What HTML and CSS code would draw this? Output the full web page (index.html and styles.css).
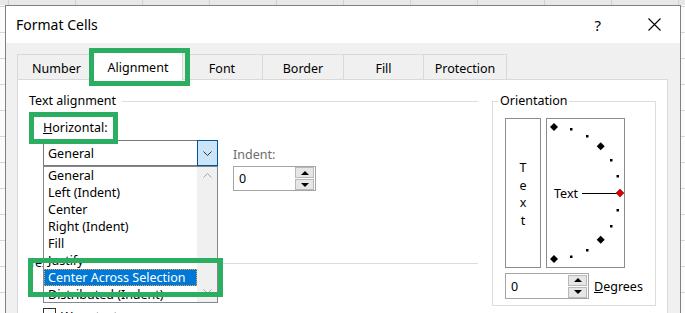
FILE: index.html
```html
<!DOCTYPE html>
<html lang="en">
<head>
    <meta charset="UTF-8">
    <meta name="viewport" content="width=device-width, initial-scale=1.0">
    <title>Format Cells</title>
    <link rel="stylesheet" href="styles.css">
</head>
<body>
    <div class="dialog">
        <div class="titlebar">
            <span class="title">Format Cells</span>
            <span class="help">?</span>
            <svg class="close" width="13" height="13" viewBox="0 0 13 13"><path d="M0.5 0.5 L12.5 12.5 M12.5 0.5 L0.5 12.5" stroke="#000" stroke-width="1.1" fill="none"/></svg>
        </div>

        <div class="tabs">
            <div class="tab tab-number">Number</div>
            <div class="tab tab-alignment active">Alignment<span class="mark mark-tab"></span></div>
            <div class="tab tab-font">Font</div>
            <div class="tab tab-border">Border</div>
            <div class="tab tab-fill">Fill</div>
            <div class="tab tab-protection">Protection</div>
        </div>

        <div class="panel">
            <div class="align-col">
                <div class="group-title"><span>Text alignment</span><i class="rule"></i></div>
                <div class="field-label"><u>H</u>orizontal:<span class="mark mark-horiz"></span></div>

                <div class="combo-row">
                    <div class="combo">
                        <span class="combo-value">General</span>
                        <span class="combo-btn">
                            <svg width="9" height="5" viewBox="0 0 9 5"><path d="M0.5 0.5 L4.5 4.5 L8.5 0.5" stroke="#333" fill="none"/></svg>
                        </span>
                        <div class="dropdown">
                            <ul class="options">
                                <li>General</li>
                                <li>Left (Indent)</li>
                                <li>Center</li>
                                <li>Right (Indent)</li>
                                <li>Fill</li>
                                <li>Justify</li>
                                <li class="selected">Center Across Selection</li>
                                <li>Distributed (Indent)</li>
                            </ul>
                            <div class="scrollbar">
                                <svg width="9" height="5" viewBox="0 0 9 5"><path d="M0.5 4.5 L4.5 0.5 L8.5 4.5" stroke="#a6a6a6" fill="none"/></svg>
                                <svg width="9" height="5" viewBox="0 0 9 5"><path d="M0.5 0.5 L4.5 4.5 L8.5 0.5" stroke="#a6a6a6" fill="none"/></svg>
                            </div>
                        </div>
                        <span class="mark mark-option"></span>
                    </div>

                    <div class="indent">
                        <div class="indent-label">Indent:</div>
                        <div class="spin">
                            <span class="spin-value">0</span>
                            <span class="spin-btns">
                                <span class="spin-btn up"></span>
                                <span class="spin-btn down"></span>
                            </span>
                        </div>
                    </div>
                </div>

                <div class="group-title control"><span>Text control</span><i class="rule"></i></div>
                <div class="check"><span class="box"></span><span class="check-label"><u>W</u>rap text</span></div>
            </div>

            <fieldset class="orientation">
                <legend>Orientation</legend>
                <div class="dials">
                    <div class="vert-text"><span>T</span><span>e</span><span>x</span><span>t</span></div>
                    <div class="dial">
                        <svg width="77" height="148" viewBox="0 0 77 148">
                            <text x="7" y="79" font-family="Noto Sans, sans-serif" font-size="12.5">Text</text>
                            <line x1="35" y1="74.5" x2="70" y2="74.5" stroke="#000" stroke-width="1"/>
                            <polygon points="7,4 11,8 7,12 3,8" fill="#000"/>
                            <rect x="23" y="9" width="2.5" height="2.5" fill="#000"/>
                            <rect x="39" y="16" width="2.5" height="2.5" fill="#000"/>
                            <polygon points="53.7,23.3 57.7,27.3 53.7,31.3 49.7,27.3" fill="#000"/>
                            <rect x="63" y="40" width="2.5" height="2.5" fill="#000"/>
                            <rect x="69.5" y="56" width="2.5" height="2.5" fill="#000"/>
                            <polygon points="73,70 77,74 73,78 69,74" fill="#e00000" stroke="#600" stroke-width="0.5"/>
                            <rect x="69.5" y="90" width="2.5" height="2.5" fill="#000"/>
                            <rect x="63" y="106" width="2.5" height="2.5" fill="#000"/>
                            <polygon points="53.7,116.7 57.7,120.7 53.7,124.7 49.7,120.7" fill="#000"/>
                            <rect x="39" y="130" width="2.5" height="2.5" fill="#000"/>
                            <rect x="23" y="136.5" width="2.5" height="2.5" fill="#000"/>
                            <polygon points="7,136 11,140 7,144 3,140" fill="#000"/>
                        </svg>
                    </div>
                </div>
                <div class="degrees-row">
                    <div class="spin degrees">
                        <span class="spin-value">0</span>
                        <span class="spin-btns">
                            <span class="spin-btn up"></span>
                            <span class="spin-btn down"></span>
                        </span>
                    </div>
                    <span class="degrees-label"><u>D</u>egrees</span>
                </div>
            </fieldset>
        </div>
    </div>
</body>
</html>
```

FILE: styles.css
```css
body {
    margin: 0;
    height: 313px;
    overflow: hidden;
    box-sizing: border-box;
    padding: 5px 0 0 5px;
    font-family: "Noto Sans", sans-serif;
    font-size: 12.5px;
    color: #000;
    background-color: #fbfbfb;
    background-image:
        linear-gradient(to right, #d2d2d2 1px, transparent 1px),
        linear-gradient(#e8e8e8, #e8e8e8),
        linear-gradient(#d6d6d6 1px, transparent 1px);
    background-size: 67px 100%, 100% 5px, 100% 26px;
    background-position: 8px 0, 0 0, 0 6px;
    background-repeat: repeat, no-repeat, repeat;
}
.dialog {
    width: 676px;
    height: 330px;
    box-sizing: border-box;
    border: 1px solid #808080;
    background: #f0f0f0;
}
.titlebar {
    height: 37px;
    background: #fff;
    display: flex;
    align-items: center;
}
.title {
    flex: 1;
    padding-left: 10px;
    font-size: 14px;
}
.help {
    font-size: 15px;
    margin-right: 47px;
}
.close {
    margin-right: 19px;
}

/* tabs */
.tabs {
    height: 36px;
    display: flex;
    align-items: flex-end;
    padding-left: 11px;
}
.tab {
    height: 25px;
    box-sizing: border-box;
    border-top: 1px solid #d9d9d9;
    border-left: 1px solid #d9d9d9;
    display: flex;
    align-items: center;
    justify-content: center;
    padding-top: 2px;
}
.tab:last-child {
    border-right: 1px solid #d9d9d9;
}
.tab-number { width: 78px; }
.tab-alignment { width: 90px; }
.tab-font { width: 81px; }
.tab-border { width: 81px; }
.tab-fill { width: 80px; }
.tab-protection { width: 84px; }
.tab.active {
    position: relative;
    z-index: 2;
    height: 28px;
    margin: 0 -2px -1px -2px;
    padding-top: 1px;
    background: #fff;
    border-right: 1px solid #d9d9d9;
}

/* green highlight boxes */
.mark {
    position: absolute;
    box-sizing: border-box;
    border: 5px solid #2bae62;
    z-index: 10;
}
.mark-tab {
    left: -5px;
    top: -5px;
    width: 101px;
    height: 38px;
}
.mark-horiz {
    left: -14px;
    top: -8px;
    width: 89px;
    height: 32px;
}
.mark-option {
    left: -16px;
    top: 117px;
    width: 195px;
    height: 39px;
}

/* content panel */
.panel {
    margin-left: 11px;
    width: 651px;
    height: 260px;
    box-sizing: border-box;
    border: 1px solid #d9d9d9;
    background: #fff;
    display: flex;
    gap: 14px;
    padding: 13px 0 0 11px;
}
.align-col {
    width: 449px;
}
.group-title {
    display: flex;
    align-items: center;
    gap: 6px;
    height: 16px;
    line-height: 16px;
}
.group-title.control {
    margin-top: 64px;
}
.rule {
    flex: 1;
    height: 1px;
    background: #dcdcdc;
}
.field-label {
    position: relative;
    width: max-content;
    line-height: 16px;
    margin: 11px 0 0 14px;
}
.combo-row {
    display: flex;
    align-items: flex-start;
    gap: 15px;
    margin: 4px 0 0 14px;
}
.combo {
    position: relative;
    width: 175px;
    height: 26px;
    box-sizing: border-box;
    border: 1px solid #7a7a7a;
    background: #fff;
    display: flex;
    align-items: center;
}
.combo-value {
    flex: 1;
    padding-left: 4px;
}
.combo-btn {
    width: 21px;
    height: 26px;
    margin: -1px -1px -1px 0;
    box-sizing: border-box;
    border: 1px solid #005499;
    background: #cce4f7;
    display: flex;
    align-items: center;
    justify-content: center;
}

/* open dropdown list */
.dropdown {
    position: absolute;
    left: -1px;
    top: 25px;
    width: 175px;
    height: 137px;
    box-sizing: border-box;
    border: 1px solid #828790;
    background: #fff;
    display: flex;
    overflow: hidden;
    z-index: 5;
}
.options {
    flex: 1;
    list-style: none;
    margin: 0;
    padding: 0;
}
.options li {
    height: 17px;
    line-height: 17px;
    padding-left: 4px;
    white-space: nowrap;
}
.options li.selected {
    background: #0078d7;
    color: #fff;
    outline: 1px dotted #f5a142;
    outline-offset: -1px;
}
.scrollbar {
    width: 20px;
    background: #f0f0f0;
    display: flex;
    flex-direction: column;
    align-items: center;
    justify-content: space-between;
    padding: 6px 0 8px;
    box-sizing: border-box;
}

/* indent and degrees spinners */
.indent {
    margin-top: 7px;
}
.indent-label {
    line-height: 16px;
    color: #6d6d6d;
}
.spin {
    margin-top: 3px;
    width: 83px;
    height: 25px;
    box-sizing: border-box;
    border: 1px solid #a5a5a5;
    display: flex;
    align-items: center;
    background: #fff;
}
.spin-value {
    flex: 1;
    padding-left: 5px;
}
.spin-btns {
    display: flex;
    flex-direction: column;
    gap: 1px;
    margin-right: 1px;
}
.spin-btn {
    width: 19px;
    height: 11px;
    box-sizing: border-box;
    border: 1px solid #b9b9b9;
    background: #e6e6e6;
    display: flex;
    align-items: center;
    justify-content: center;
}
.spin-btn::before {
    content: "";
    border-left: 4px solid transparent;
    border-right: 4px solid transparent;
}
.spin-btn.up::before {
    border-bottom: 4px solid #000;
}
.spin-btn.down::before {
    border-top: 4px solid #000;
}

.check {
    display: flex;
    align-items: flex-start;
    gap: 5px;
    margin: 37px 0 0 14px;
    line-height: 16px;
}
.check-label {
    padding-top: 1px;
}
.box {
    width: 13px;
    height: 13px;
    box-sizing: border-box;
    border: 1px solid #333;
    background: #fff;
}

/* orientation */
.orientation {
    margin: 0;
    width: 164px;
    height: 213px;
    box-sizing: border-box;
    border: 1px solid #dcdcdc;
    padding: 9px 0 0 12px;
}
.orientation legend {
    padding: 0 2px;
    margin-left: -7px;
    line-height: 16px;
}
.dials {
    display: flex;
    gap: 5px;
}
.vert-text {
    width: 36px;
    height: 150px;
    box-sizing: border-box;
    border: 1px solid #8c8c8c;
    display: flex;
    flex-direction: column;
    align-items: center;
    justify-content: center;
    line-height: 17.5px;
    padding-top: 2px;
}
.dial {
    width: 79px;
    height: 150px;
    box-sizing: border-box;
    border: 1px solid #8c8c8c;
}
.dial svg {
    display: block;
}
.degrees-row {
    display: flex;
    align-items: center;
    gap: 5px;
    margin-top: 5px;
}
.spin.degrees {
    margin-top: 0;
    width: 84px;
    height: 26px;
}
```
